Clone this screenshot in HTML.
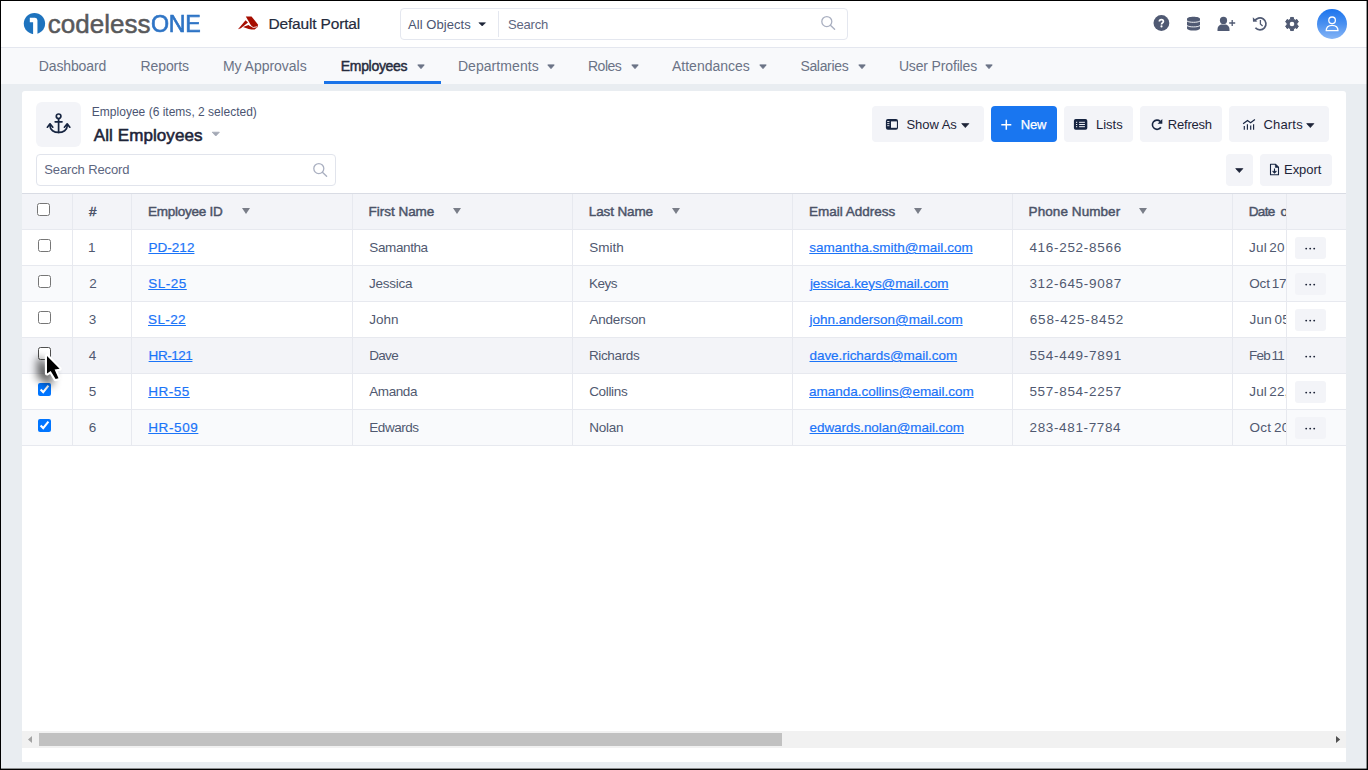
<!DOCTYPE html>
<html><head><meta charset="utf-8"><title>Employees</title><style>
*{box-sizing:border-box;margin:0;padding:0}
html,body{width:1368px;height:770px;overflow:hidden}
body{font-family:"Liberation Sans",sans-serif;background:#e9edf1;position:relative}
.a{position:absolute}
.t{position:absolute;line-height:20px;white-space:nowrap}
.car{position:absolute;width:0;height:0;border-left:4px solid transparent;border-right:4px solid transparent;border-top:5px solid #6b7386}
.btn{position:absolute;background:#f3f4f8;border-radius:4px}
.vl{position:absolute;width:1px;background:#e7e9ef;top:194px;height:252px}
.hl{position:absolute;left:22px;width:1324px;height:1px;background:#e7e9ef}
.flt{position:absolute;top:208px;width:0;height:0;border-left:4px solid transparent;border-right:4px solid transparent;border-top:6.5px solid #797d88}
input.cb{position:absolute;width:13px;height:13px;margin:0}
.more{position:absolute;left:1295px;width:31px;height:22px;background:#f3f4f8;border-radius:3px}
.dots{position:absolute;left:1305px;width:11px;height:2px}
.dots i{position:absolute;top:0;width:2px;height:2px;border-radius:1px;background:#1d2438}
</style></head><body>
<div class="a" style="left:0;top:0;width:1368px;height:47px;background:#fff"></div>
<div class="a" style="left:0;top:47px;width:1368px;height:1px;background:#e4e7ef"></div>
<div class="a" style="left:0;top:48px;width:1368px;height:36px;background:#f8f9fb"></div>
<svg class="a" style="left:23px;top:12px" width="23" height="24" viewBox="0 0 23 24"><circle cx="11.45" cy="11.55" r="10.65" fill="#1e73be"/><path d="M6.8 5.8 H12 Q14.45 5.8 14.45 8.3 V23 H10.1 V10.2 H6.8 Z" fill="#fff"/></svg>
<div class="t" style="left:47.8px;top:14px;font-size:26px;letter-spacing:0px;color:#58595b;-webkit-text-stroke:0.5px currentColor;transform-origin:0 0;transform:scaleX(1.0);">codeless</div>
<div class="t" style="left:150.75px;top:14px;font-size:23.4px;letter-spacing:-0.3px;color:#2e74c5;-webkit-text-stroke:0.6px currentColor;transform-origin:0 0;transform:scaleX(0.994);">ONE</div>
<svg class="a" style="left:238px;top:16px" width="21" height="14" viewBox="0 0 21 14"><path d="M7.8 0.5 L13.5 0.5 L20.1 8.7 L19.4 11.3 L14.2 11.5 Z" fill="#a60d00"/><path d="M7.6 4.2 L10 6.6 L2.8 12.3 L0 13.2 Z" fill="#a60d00"/><path d="M5 10.9 C7 10.6 8.6 9.6 10.4 9 L14.6 11.6 L19.4 11.3 L16.6 13.5 C13 13.6 9 12.6 5 10.9 Z" fill="#a60d00"/><path d="M10.6 8.4 L15.4 11.5 L19 10.6" fill="none" stroke="#fff" stroke-width="0.7"/></svg>
<div class="t" style="left:268.5px;top:14px;font-size:15.5px;letter-spacing:-0.17px;color:#252b3d;-webkit-text-stroke:0.2px currentColor;">Default Portal</div>
<div class="a" style="left:400px;top:8px;width:448px;height:32px;border:1px solid #e4e7ef;border-radius:4px;background:#fff"></div>
<div class="a" style="left:498px;top:11px;width:1px;height:26px;background:#e4e7ef"></div>
<div class="t" style="left:408.05px;top:15px;font-size:13px;letter-spacing:0.05px;color:#4b5572;">All Objects</div>
<svg class="a" style="left:478px;top:22px" width="9" height="5" viewBox="0 0 9 5"><path d="M0.9 0.7 H7.5 L4.2 4 Z" fill="#1d2438" stroke="#1d2438" stroke-width="0.6" stroke-linejoin="round"/></svg>
<div class="t" style="left:508.0px;top:15px;font-size:13px;letter-spacing:-0.2px;color:#5d6680;">Search</div>
<svg class="a" style="left:820px;top:15px" width="16" height="16" viewBox="0 0 16 16"><circle cx="6.8" cy="6.6" r="5" fill="none" stroke="#aab0c1" stroke-width="1.3"/><path d="M10.4 10.2 L14.6 14.2" stroke="#aab0c1" stroke-width="1.4" stroke-linecap="round"/></svg>
<svg class="a" style="left:1152px;top:14px" width="18" height="18" viewBox="0 0 18 18"><circle cx="9.4" cy="9" r="7.9" fill="#505a73"/><path d="M7.4 7.5 C7.4 6.2 8.3 5.7 9.4 5.7 C10.6 5.7 11.4 6.4 11.4 7.4 C11.4 8.8 9.5 8.8 9.5 10.5" fill="none" stroke="#fff" stroke-width="1.7"/><circle cx="9.5" cy="12.4" r="1.05" fill="#fff"/></svg>
<svg class="a" style="left:1187px;top:16px" width="13" height="15" viewBox="0 0 13 15"><path d="M0 3 C0 1.6 2.9 0.7 6.5 0.7 S13 1.6 13 3 V12.2 C13 13.6 10.1 14.6 6.5 14.6 S0 13.6 0 12.2 Z" fill="#505a73"/><path d="M0 5 C1.5 6 4 6.3 6.5 6.3 S11.5 6 13 5" fill="none" stroke="#fff" stroke-width="0.9"/><path d="M0 9.6 C1.5 10.6 4 10.9 6.5 10.9 S11.5 10.6 13 9.6" fill="none" stroke="#fff" stroke-width="0.9"/></svg>
<svg class="a" style="left:1217px;top:16px" width="19" height="16" viewBox="0 0 19 16"><circle cx="6.5" cy="4.4" r="3.6" fill="#505a73"/><path d="M0.5 14.9 V13.4 C0.5 10.4 2.8 8.6 5 8.6 H8 C10.2 8.6 12.5 10.4 12.5 13.4 V14.9 Z" fill="#505a73"/><path d="M15.2 4 V10 M12.2 7 H18.2" stroke="#505a73" stroke-width="1.3"/></svg>
<svg class="a" style="left:1252px;top:16px" width="16" height="16" viewBox="0 0 16 16"><path d="M2.6 5.2 A6 6 0 1 1 3.4 11.8" fill="none" stroke="#505a73" stroke-width="1.7"/><path d="M0.8 1.2 L1 5.8 L5.4 5.4 Z" fill="#505a73"/><path d="M8.4 4 V8 L10.6 10" fill="none" stroke="#505a73" stroke-width="1.3"/></svg>
<svg class="a" style="left:1284px;top:16px" width="16" height="16" viewBox="0 0 16 16"><path d="M6.54 1.46 L9.46 1.46 L9.59 3.26 L11.31 4.25 L12.93 3.46 L14.39 6.00 L12.90 7.01 L12.90 8.99 L14.39 10.00 L12.93 12.54 L11.31 11.75 L9.59 12.74 L9.46 14.54 L6.54 14.54 L6.41 12.74 L4.69 11.75 L3.07 12.54 L1.61 10.00 L3.10 8.99 L3.10 7.01 L1.61 6.00 L3.07 3.46 L4.69 4.25 L6.41 3.26Z" fill="#505a73" stroke="#505a73" stroke-width="1" stroke-linejoin="round"/><circle cx="8" cy="8" r="2.3" fill="#fff"/></svg>
<div class="a" style="left:1317px;top:9px;width:30px;height:30px;border-radius:15px;background:linear-gradient(180deg,#1b74ee 0%,#4a90f0 50%,#86b5f6 100%)"></div>
<svg class="a" style="left:1317px;top:9px" width="30" height="30" viewBox="0 0 30 30"><circle cx="15.1" cy="11.3" r="3.3" fill="none" stroke="#fff" stroke-width="1.3"/><path d="M9.2 21.7 C9.2 18 11.8 16.3 15.1 16.3 S21 18 21 21.7 Z" fill="none" stroke="#fff" stroke-width="1.3" stroke-linejoin="round"/></svg>
<div class="t" style="left:38.75px;top:56px;font-size:14px;letter-spacing:-0.12px;color:#6b7386;">Dashboard</div>
<div class="t" style="left:140.62px;top:56px;font-size:14px;letter-spacing:-0.12px;color:#6b7386;">Reports</div>
<div class="t" style="left:222.88px;top:56px;font-size:14px;letter-spacing:-0.02px;color:#6b7386;">My Approvals</div>
<div class="t" style="left:340.75px;top:56px;font-size:14px;letter-spacing:-0.31px;color:#252b3d;-webkit-text-stroke:0.45px currentColor;">Employees</div>
<div class="t" style="left:457.88px;top:56px;font-size:14px;letter-spacing:0.07px;color:#6b7386;">Departments</div>
<div class="t" style="left:588.0px;top:56px;font-size:14px;letter-spacing:-0.5px;color:#6b7386;">Roles</div>
<div class="t" style="left:672.0px;top:56px;font-size:14px;letter-spacing:0.0px;color:#6b7386;">Attendances</div>
<div class="t" style="left:800.38px;top:56px;font-size:14px;letter-spacing:-0.32px;color:#6b7386;">Salaries</div>
<div class="t" style="left:898.88px;top:56px;font-size:14px;letter-spacing:-0.15px;color:#6b7386;">User Profiles</div>
<svg class="a" style="left:417px;top:64px" width="9" height="6" viewBox="0 0 9 6"><path d="M0.8 0.9 H7.2 L4 4.6 Z" fill="#6b7386" stroke="#6b7386" stroke-width="1" stroke-linejoin="round"/></svg>
<svg class="a" style="left:547px;top:64px" width="9" height="6" viewBox="0 0 9 6"><path d="M0.8 0.9 H7.2 L4 4.6 Z" fill="#6b7386" stroke="#6b7386" stroke-width="1" stroke-linejoin="round"/></svg>
<svg class="a" style="left:630.5px;top:64px" width="9" height="6" viewBox="0 0 9 6"><path d="M0.8 0.9 H7.2 L4 4.6 Z" fill="#6b7386" stroke="#6b7386" stroke-width="1" stroke-linejoin="round"/></svg>
<svg class="a" style="left:758.8px;top:64px" width="9" height="6" viewBox="0 0 9 6"><path d="M0.8 0.9 H7.2 L4 4.6 Z" fill="#6b7386" stroke="#6b7386" stroke-width="1" stroke-linejoin="round"/></svg>
<svg class="a" style="left:857.5px;top:64px" width="9" height="6" viewBox="0 0 9 6"><path d="M0.8 0.9 H7.2 L4 4.6 Z" fill="#6b7386" stroke="#6b7386" stroke-width="1" stroke-linejoin="round"/></svg>
<svg class="a" style="left:985px;top:64px" width="9" height="6" viewBox="0 0 9 6"><path d="M0.8 0.9 H7.2 L4 4.6 Z" fill="#6b7386" stroke="#6b7386" stroke-width="1" stroke-linejoin="round"/></svg>
<div class="a" style="left:324px;top:81px;width:117px;height:3px;background:#1a73e8"></div>
<div class="a" style="left:22px;top:91px;width:1324px;height:671px;background:#fff;border-radius:3px 3px 0 0"></div>
<div class="a" style="left:36px;top:102px;width:45px;height:45px;background:#f3f4f8;border-radius:6px"></div>
<svg class="a" style="left:46px;top:112px" width="26" height="23" viewBox="0 0 26 23"><g fill="none" stroke="#172541" stroke-width="1.7" stroke-linecap="round" stroke-linejoin="round"><circle cx="12.6" cy="4.3" r="2.3"/><path d="M12.6 6.8 V20.4"/><path d="M9.2 9.8 H16"/><path d="M4 14 C4 18 8 20.4 12.6 20.4 S21.2 18 21.2 14"/><path d="M1.4 15.2 L4 11.8 L6.8 15.2"/><path d="M18.4 15.2 L21.2 11.8 L23.8 15.2"/></g></svg>
<div class="t" style="left:91.85px;top:102px;font-size:12px;letter-spacing:0.01px;color:#4b5572;">Employee (6 items, 2 selected)</div>
<div class="t" style="left:93.8px;top:126px;font-size:17px;letter-spacing:0.08px;color:#1d2438;-webkit-text-stroke:0.55px currentColor;">All Employees</div>
<svg class="a" style="left:211px;top:131px" width="10" height="6" viewBox="0 0 10 6"><path d="M1.2 1.2 H8.4 L4.8 5 Z" fill="#a3a8b5" stroke="#a3a8b5" stroke-width="0.8" stroke-linejoin="round"/></svg>
<div class="a" style="left:36px;top:154px;width:300px;height:32px;border:1px solid #e1e4ec;border-radius:4px;background:#fff"></div>
<div class="t" style="left:44.25px;top:160px;font-size:13px;letter-spacing:-0.12px;color:#5d6680;">Search Record</div>
<svg class="a" style="left:312px;top:162px" width="16" height="16" viewBox="0 0 16 16"><circle cx="6.8" cy="6.6" r="5" fill="none" stroke="#aab0c1" stroke-width="1.3"/><path d="M10.4 10.2 L14.6 14.2" stroke="#aab0c1" stroke-width="1.4" stroke-linecap="round"/></svg>
<div class="btn" style="left:872px;top:106px;width:112px;height:36px;background:#f3f4f8"></div>
<div class="btn" style="left:991px;top:106px;width:66px;height:36px;background:#1976f0"></div>
<div class="btn" style="left:1064px;top:106px;width:69px;height:36px;background:#f3f4f8"></div>
<div class="btn" style="left:1140px;top:106px;width:82px;height:36px;background:#f3f4f8"></div>
<div class="btn" style="left:1229px;top:106px;width:100px;height:36px;background:#f3f4f8"></div>
<div class="btn" style="left:1226px;top:154px;width:27px;height:32px;background:#f3f4f8"></div>
<div class="btn" style="left:1260px;top:154px;width:72px;height:32px;background:#f3f4f8"></div>
<svg class="a" style="left:885px;top:118px" width="14" height="13" viewBox="0 0 14 13"><rect x="0.9" y="1" width="12.1" height="10.8" rx="2" fill="#172541"/><rect x="6" y="3.4" width="5.9" height="6.4" fill="#f3f4f8"/><path d="M2.2 3.5 H4.4 M2.2 5.6 H4.4 M2.2 7.7 H4.4" stroke="#f3f4f8" stroke-width="0.9"/></svg>
<div class="t" style="left:906.4px;top:115px;font-size:13px;letter-spacing:-0.03px;color:#1d2438;">Show As</div>
<svg class="a" style="left:961.2px;top:122.6px" width="9" height="6" viewBox="0 0 9 6"><path d="M0.7 0.6 H7.9 L4.3 4.6 Z" fill="#1d2438" stroke="#1d2438" stroke-width="0.7" stroke-linejoin="round"/></svg>
<svg class="a" style="left:1000px;top:118px" width="13" height="13" viewBox="0 0 13 13"><path d="M6.3 1.7 V11.7 M1.3 6.7 H11.3" stroke="#fff" stroke-width="1.5"/></svg>
<div class="t" style="left:1020.65px;top:115px;font-size:13px;letter-spacing:-0.15px;color:#fff;-webkit-text-stroke:0.25px currentColor;">New</div>
<svg class="a" style="left:1073px;top:118px" width="15" height="13" viewBox="0 0 15 13"><rect x="0.9" y="1" width="13.4" height="10.8" rx="1.8" fill="#172541"/><path d="M3 4.3 H4.2 M3 6.5 H4.2 M3 8.7 H4.2 M6.1 4.3 H11.9 M6.1 6.5 H11.9 M6.1 8.7 H11.9" stroke="#f3f4f8" stroke-width="1"/></svg>
<div class="t" style="left:1095.95px;top:115px;font-size:13px;letter-spacing:0.02px;color:#1d2438;">Lists</div>
<svg class="a" style="left:1150px;top:118px" width="14" height="13" viewBox="0 0 14 13"><path d="M10.2 3.4 A4.6 4.6 0 1 0 10.9 9.2" fill="none" stroke="#172541" stroke-width="1.6"/><path d="M12.3 1 V5.7 H7.6 Z" fill="#172541"/></svg>
<div class="t" style="left:1167.85px;top:115px;font-size:13px;letter-spacing:-0.22px;color:#1d2438;">Refresh</div>
<svg class="a" style="left:1242px;top:118px" width="14" height="13" viewBox="0 0 14 13"><path d="M1.1 5.7 L5.5 2.5 L8.6 4.7 L12.9 1.4" fill="none" stroke="#172541" stroke-width="1.2"/><path d="M2.3 8 V11.8 M5.4 6.2 V11.8 M8.7 7.6 V11.8 M11.6 6.2 V11.8" stroke="#172541" stroke-width="1.15"/></svg>
<div class="t" style="left:1263.45px;top:115px;font-size:13px;letter-spacing:0.18px;color:#1d2438;">Charts</div>
<svg class="a" style="left:1305.6px;top:122.6px" width="9" height="6" viewBox="0 0 9 6"><path d="M0.7 0.6 H7.9 L4.3 4.6 Z" fill="#1d2438" stroke="#1d2438" stroke-width="0.7" stroke-linejoin="round"/></svg>
<svg class="a" style="left:1234.8px;top:167.6px" width="9" height="6" viewBox="0 0 9 6"><path d="M0.7 0.6 H7.9 L4.3 4.6 Z" fill="#1d2438" stroke="#1d2438" stroke-width="0.7" stroke-linejoin="round"/></svg>
<svg class="a" style="left:1269px;top:163px" width="11" height="13" viewBox="0 0 11 13"><path d="M1.5 1.3 H6.6 L9.5 4.2 V11.8 H1.5 Z" fill="none" stroke="#172541" stroke-width="1.1" stroke-linejoin="round"/><path d="M6.4 1.3 V4.4 H9.5" fill="#172541" stroke="#172541" stroke-width="0.6"/><path d="M5.5 5.4 V9.6 M3.6 8 L5.5 9.9 L7.4 8" fill="none" stroke="#172541" stroke-width="1.1"/></svg>
<div class="t" style="left:1284.1px;top:160px;font-size:13px;letter-spacing:-0.08px;color:#1d2438;">Export</div>
<div class="a" style="left:22px;top:193px;width:1324px;height:1px;background:#d9dce4"></div>
<div class="a" style="left:22px;top:194px;width:1324px;height:35px;background:#f3f4f8"></div>
<div class="a" style="left:22px;top:229px;width:1324px;height:36px;background:#fff"></div>
<div class="a" style="left:22px;top:265px;width:1324px;height:36px;background:#f9fafc"></div>
<div class="a" style="left:22px;top:301px;width:1324px;height:36px;background:#fff"></div>
<div class="a" style="left:22px;top:337px;width:1324px;height:36px;background:#f3f4f8"></div>
<div class="a" style="left:22px;top:373px;width:1324px;height:36px;background:#fff"></div>
<div class="a" style="left:22px;top:409px;width:1324px;height:36px;background:#f9fafc"></div>
<div class="hl" style="top:229px"></div>
<div class="hl" style="top:265px"></div>
<div class="hl" style="top:301px"></div>
<div class="hl" style="top:337px"></div>
<div class="hl" style="top:373px"></div>
<div class="hl" style="top:409px"></div>
<div class="hl" style="top:445px"></div>
<div class="vl" style="left:72px"></div>
<div class="vl" style="left:131px"></div>
<div class="vl" style="left:352px"></div>
<div class="vl" style="left:572px"></div>
<div class="vl" style="left:792px"></div>
<div class="vl" style="left:1012px"></div>
<div class="vl" style="left:1232px"></div>
<div class="t" style="left:89.12px;top:202px;font-size:13.5px;letter-spacing:0px;color:#4b5368;-webkit-text-stroke:0.45px currentColor;">#</div>
<div class="t" style="left:148.0px;top:202px;font-size:13.5px;letter-spacing:-0.25px;color:#4b5368;-webkit-text-stroke:0.45px currentColor;">Employee ID</div>
<div class="t" style="left:368.62px;top:202px;font-size:13.5px;letter-spacing:-0.03px;color:#4b5368;-webkit-text-stroke:0.45px currentColor;">First Name</div>
<div class="t" style="left:588.75px;top:202px;font-size:13.5px;letter-spacing:-0.12px;color:#4b5368;-webkit-text-stroke:0.45px currentColor;">Last Name</div>
<div class="t" style="left:809.12px;top:202px;font-size:13.5px;letter-spacing:-0.02px;color:#4b5368;-webkit-text-stroke:0.45px currentColor;">Email Address</div>
<div class="t" style="left:1028.62px;top:202px;font-size:13.5px;letter-spacing:0.07px;color:#4b5368;-webkit-text-stroke:0.45px currentColor;">Phone Number</div>
<div class="flt" style="left:242.4px"></div>
<div class="flt" style="left:453.1px"></div>
<div class="flt" style="left:672.4px"></div>
<div class="flt" style="left:914.1px"></div>
<div class="flt" style="left:1139.1px"></div>
<div class="a" style="left:1233px;top:194px;width:53px;height:252px;overflow:hidden">
<div class="t" style="left:15.75px;top:8px;font-size:13.5px;letter-spacing:-0.63px;color:#4b5368;-webkit-text-stroke:0.45px currentColor;">Date</div>
<div class="t" style="left:47.6px;top:8px;font-size:13.5px;letter-spacing:0px;color:#4b5368;-webkit-text-stroke:0.45px currentColor;">of Birth</div>
<div class="t" style="left:16.05px;top:44px;font-size:13.5px;letter-spacing:0.18px;color:#505970;word-spacing:-1.5px;">Jul 20</div>
<div class="t" style="left:16.3px;top:80px;font-size:13.5px;letter-spacing:-0.2px;color:#505970;word-spacing:-1.5px;">Oct 17</div>
<div class="t" style="left:16.45px;top:116px;font-size:13.5px;letter-spacing:0.27px;color:#505970;word-spacing:-1.5px;">Jun 05, 1992</div>
<div class="t" style="left:16.05px;top:152px;font-size:13.5px;letter-spacing:-0.74px;color:#505970;word-spacing:-1.5px;">Feb 11</div>
<div class="t" style="left:16.25px;top:188px;font-size:13.5px;letter-spacing:0.14px;color:#505970;word-spacing:-1.5px;">Jul 22, 1991</div>
<div class="t" style="left:16.5px;top:224px;font-size:13.5px;letter-spacing:0.3px;color:#505970;word-spacing:-1.5px;">Oct 20, 1993</div>
</div>
<div class="vl" style="left:1286px"></div>
<div class="t" style="left:88.0px;top:238px;font-size:13.5px;letter-spacing:0px;color:#505970;">1</div>
<div class="t" style="left:148.38px;top:238px;font-size:13.5px;letter-spacing:0.05px;color:#1b74f8;text-decoration:underline;text-underline-offset:0.6px;text-decoration-thickness:1px;-webkit-text-stroke:0.2px currentColor;">PD-212</div>
<div class="t" style="left:369.32px;top:238px;font-size:13.5px;letter-spacing:-0.39px;color:#505970;">Samantha</div>
<div class="t" style="left:589.2px;top:238px;font-size:13.5px;letter-spacing:0.0px;color:#505970;">Smith</div>
<div class="t" style="left:809.25px;top:238px;font-size:13.5px;letter-spacing:0.02px;color:#1b74f8;text-decoration:underline;text-underline-offset:0.6px;text-decoration-thickness:1px;-webkit-text-stroke:0.2px currentColor;">samantha.smith@mail.com</div>
<div class="t" style="left:1029.38px;top:238px;font-size:13.5px;letter-spacing:0.7px;color:#505970;">416-252-8566</div>
<div class="more" style="top:237px"></div>
<svg class="a" style="left:1304px;top:247px" width="13" height="4" viewBox="0 0 13 4"><circle cx="2.2" cy="1.6" r="0.95" fill="#1d2438"/><circle cx="6.2" cy="1.6" r="0.95" fill="#1d2438"/><circle cx="10.2" cy="1.6" r="0.95" fill="#1d2438"/></svg>
<div class="t" style="left:89.25px;top:274px;font-size:13.5px;letter-spacing:0px;color:#505970;">2</div>
<div class="t" style="left:148.25px;top:274px;font-size:13.5px;letter-spacing:0.5px;color:#1b74f8;text-decoration:underline;text-underline-offset:0.6px;text-decoration-thickness:1px;-webkit-text-stroke:0.2px currentColor;">SL-25</div>
<div class="t" style="left:368.95px;top:274px;font-size:13.5px;letter-spacing:-0.25px;color:#505970;">Jessica</div>
<div class="t" style="left:588.95px;top:274px;font-size:13.5px;letter-spacing:-0.5px;color:#505970;">Keys</div>
<div class="t" style="left:809.88px;top:274px;font-size:13.5px;letter-spacing:-0.09px;color:#1b74f8;text-decoration:underline;text-underline-offset:0.6px;text-decoration-thickness:1px;-webkit-text-stroke:0.2px currentColor;">jessica.keys@mail.com</div>
<div class="t" style="left:1029.38px;top:274px;font-size:13.5px;letter-spacing:0.7px;color:#505970;">312-645-9087</div>
<div class="more" style="top:273px"></div>
<svg class="a" style="left:1304px;top:283px" width="13" height="4" viewBox="0 0 13 4"><circle cx="2.2" cy="1.6" r="0.95" fill="#1d2438"/><circle cx="6.2" cy="1.6" r="0.95" fill="#1d2438"/><circle cx="10.2" cy="1.6" r="0.95" fill="#1d2438"/></svg>
<div class="t" style="left:88.75px;top:310px;font-size:13.5px;letter-spacing:0px;color:#505970;">3</div>
<div class="t" style="left:148.0px;top:310px;font-size:13.5px;letter-spacing:0.38px;color:#1b74f8;text-decoration:underline;text-underline-offset:0.6px;text-decoration-thickness:1px;-webkit-text-stroke:0.2px currentColor;">SL-22</div>
<div class="t" style="left:369.2px;top:310px;font-size:13.5px;letter-spacing:0.0px;color:#505970;">John</div>
<div class="t" style="left:589.45px;top:310px;font-size:13.5px;letter-spacing:-0.21px;color:#505970;">Anderson</div>
<div class="t" style="left:809.62px;top:310px;font-size:13.5px;letter-spacing:-0.01px;color:#1b74f8;text-decoration:underline;text-underline-offset:0.6px;text-decoration-thickness:1px;-webkit-text-stroke:0.2px currentColor;">john.anderson@mail.com</div>
<div class="t" style="left:1029.75px;top:310px;font-size:13.5px;letter-spacing:0.86px;color:#505970;">658-425-8452</div>
<div class="more" style="top:309px"></div>
<svg class="a" style="left:1304px;top:319px" width="13" height="4" viewBox="0 0 13 4"><circle cx="2.2" cy="1.6" r="0.95" fill="#1d2438"/><circle cx="6.2" cy="1.6" r="0.95" fill="#1d2438"/><circle cx="10.2" cy="1.6" r="0.95" fill="#1d2438"/></svg>
<div class="t" style="left:88.7px;top:346px;font-size:13.5px;letter-spacing:0px;color:#505970;">4</div>
<div class="t" style="left:148.62px;top:346px;font-size:13.5px;letter-spacing:-0.45px;color:#1b74f8;text-decoration:underline;text-underline-offset:0.6px;text-decoration-thickness:1px;-webkit-text-stroke:0.2px currentColor;">HR-121</div>
<div class="t" style="left:369.2px;top:346px;font-size:13.5px;letter-spacing:-0.67px;color:#505970;">Dave</div>
<div class="t" style="left:588.95px;top:346px;font-size:13.5px;letter-spacing:-0.36px;color:#505970;">Richards</div>
<div class="t" style="left:809.5px;top:346px;font-size:13.5px;letter-spacing:-0.05px;color:#1b74f8;text-decoration:underline;text-underline-offset:0.6px;text-decoration-thickness:1px;-webkit-text-stroke:0.2px currentColor;">dave.richards@mail.com</div>
<div class="t" style="left:1029.38px;top:346px;font-size:13.5px;letter-spacing:0.7px;color:#505970;">554-449-7891</div>
<svg class="a" style="left:1304px;top:355px" width="13" height="4" viewBox="0 0 13 4"><circle cx="2.2" cy="1.6" r="0.95" fill="#1d2438"/><circle cx="6.2" cy="1.6" r="0.95" fill="#1d2438"/><circle cx="10.2" cy="1.6" r="0.95" fill="#1d2438"/></svg>
<div class="t" style="left:88.75px;top:382px;font-size:13.5px;letter-spacing:0px;color:#505970;">5</div>
<div class="t" style="left:148.25px;top:382px;font-size:13.5px;letter-spacing:0.5px;color:#1b74f8;text-decoration:underline;text-underline-offset:0.6px;text-decoration-thickness:1px;-webkit-text-stroke:0.2px currentColor;">HR-55</div>
<div class="t" style="left:369.2px;top:382px;font-size:13.5px;letter-spacing:-0.4px;color:#505970;">Amanda</div>
<div class="t" style="left:589.2px;top:382px;font-size:13.5px;letter-spacing:-0.33px;color:#505970;">Collins</div>
<div class="t" style="left:809.12px;top:382px;font-size:13.5px;letter-spacing:-0.03px;color:#1b74f8;text-decoration:underline;text-underline-offset:0.6px;text-decoration-thickness:1px;-webkit-text-stroke:0.2px currentColor;">amanda.collins@email.com</div>
<div class="t" style="left:1029.38px;top:382px;font-size:13.5px;letter-spacing:0.7px;color:#505970;">557-854-2257</div>
<div class="more" style="top:381px"></div>
<svg class="a" style="left:1304px;top:391px" width="13" height="4" viewBox="0 0 13 4"><circle cx="2.2" cy="1.6" r="0.95" fill="#1d2438"/><circle cx="6.2" cy="1.6" r="0.95" fill="#1d2438"/><circle cx="10.2" cy="1.6" r="0.95" fill="#1d2438"/></svg>
<div class="t" style="left:88.75px;top:418px;font-size:13.5px;letter-spacing:0px;color:#505970;">6</div>
<div class="t" style="left:148.25px;top:418px;font-size:13.5px;letter-spacing:0.6px;color:#1b74f8;text-decoration:underline;text-underline-offset:0.6px;text-decoration-thickness:1px;-webkit-text-stroke:0.2px currentColor;">HR-509</div>
<div class="t" style="left:369.32px;top:418px;font-size:13.5px;letter-spacing:-0.46px;color:#505970;">Edwards</div>
<div class="t" style="left:589.2px;top:418px;font-size:13.5px;letter-spacing:-0.25px;color:#505970;">Nolan</div>
<div class="t" style="left:809.5px;top:418px;font-size:13.5px;letter-spacing:-0.05px;color:#1b74f8;text-decoration:underline;text-underline-offset:0.6px;text-decoration-thickness:1px;-webkit-text-stroke:0.2px currentColor;">edwards.nolan@mail.com</div>
<div class="t" style="left:1029.5px;top:418px;font-size:13.5px;letter-spacing:0.64px;color:#505970;">283-481-7784</div>
<div class="more" style="top:417px"></div>
<svg class="a" style="left:1304px;top:427px" width="13" height="4" viewBox="0 0 13 4"><circle cx="2.2" cy="1.6" r="0.95" fill="#1d2438"/><circle cx="6.2" cy="1.6" r="0.95" fill="#1d2438"/><circle cx="10.2" cy="1.6" r="0.95" fill="#1d2438"/></svg>
<input type="checkbox" class="cb" style="left:37px;top:203px">
<input type="checkbox" class="cb" style="left:38px;top:239px">
<input type="checkbox" class="cb" style="left:38px;top:275px">
<input type="checkbox" class="cb" style="left:38px;top:311px">
<div class="a" style="left:38px;top:347px;width:13px;height:13px;border:1px solid #4f4f4f;border-radius:2.5px;background:#fff"></div>
<input type="checkbox" class="cb" style="left:38px;top:383px" checked>
<input type="checkbox" class="cb" style="left:38px;top:419px" checked>
<div class="a" style="left:22px;top:731px;width:1324px;height:17px;background:#f1f1f1"></div>
<div class="a" style="left:39px;top:733px;width:743px;height:13px;background:#c1c1c1"></div>
<svg class="a" style="left:27px;top:735px" width="6" height="9" viewBox="0 0 6 9"><path d="M5 1 V8 L1 4.5 Z" fill="#a3a3a3"/></svg>
<svg class="a" style="left:1335px;top:735px" width="6" height="9" viewBox="0 0 6 9"><path d="M1 1 V8 L5.2 4.5 Z" fill="#505050"/></svg>
<svg class="a" style="left:10px;top:335px;filter:blur(4.5px);opacity:0.6" width="60" height="70" viewBox="0 0 60 70"><path transform="translate(29.5,25)" d="M0 0 L0 17.5 L3.7 15 L8.6 23.1 L11.5 22.2 L7.6 13.6 L12.6 12.7 Z" fill="#000" stroke="#000" stroke-width="5" stroke-linejoin="round"/></svg>
<svg class="a" style="left:41.6px;top:350.6px" width="26" height="36" viewBox="-5 -5 26 36"><path d="M0 0 L0 17.5 L3.7 15 L8.6 23.1 L11.5 22.2 L7.6 13.6 L12.6 12.7 Z" fill="#000" stroke="#fff" stroke-width="4.2" stroke-linejoin="round"/><path d="M0 0 L0 17.5 L3.7 15 L8.6 23.1 L11.5 22.2 L7.6 13.6 L12.6 12.7 Z" fill="#000"/></svg>
<div class="a" style="left:0;top:0;width:1368px;height:770px;border:1px solid #000;pointer-events:none"></div>
<div class="a" style="left:1366px;top:0;width:1px;height:770px;background:rgba(0,0,0,0.4)"></div>
<div class="a" style="left:0;top:768px;width:1368px;height:1px;background:rgba(0,0,0,0.4)"></div>
</body></html>
